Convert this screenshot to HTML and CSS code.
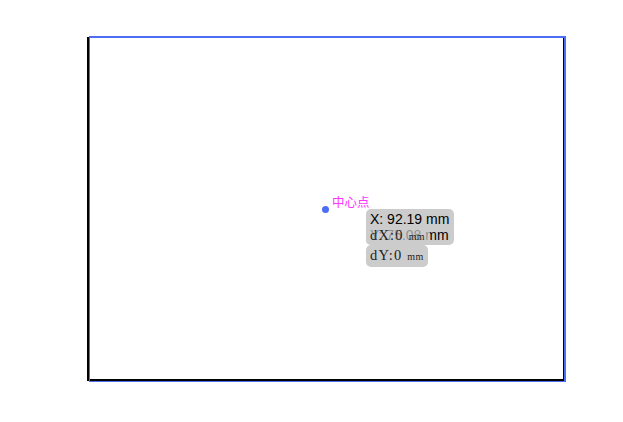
FILE: index.html
```html
<!DOCTYPE html>
<html>
<head>
<meta charset="utf-8">
<link rel="stylesheet" href="styles.css">
</head>
<body>
<div class="canvas">
  <div class="frame-black"></div>
  <div class="frame-blue"></div>
  <div class="dot"></div>
  <div class="label">中心点</div>
  <div class="tip tip-xy">
    <div class="line">X: 92.19 mm</div>
    <div class="line">Y: 75.08 mm</div>
  </div>
  <div class="tip tip-d tip-dx">dX:0 <span class="unit">mm</span></div>
  <div class="tip tip-d tip-dy">dY:0 <span class="unit">mm</span></div>
</div>
</body>
</html>
```
FILE: styles.css
```css
html, body {
  margin: 0;
  padding: 0;
  background: #fff;
}
.canvas {
  position: relative;
  width: 623px;
  height: 422px;
  overflow: hidden;
  background: #fff;
}
.frame-black {
  position: absolute;
  left: 87px;
  top: 37px;
  width: 474px;
  height: 341px;
  border: 1px solid #000;
  border-left-width: 2px;
  border-bottom-width: 2px;
}
.frame-blue {
  position: absolute;
  left: 89px;
  top: 36px;
  width: 474px;
  height: 343px;
  border: 1px solid #4d6ef2;
  border-top-width: 2px;
  border-right-width: 2px;
}
.dot {
  position: absolute;
  left: 322px;
  top: 206px;
  width: 7px;
  height: 7px;
  border-radius: 50%;
  background: #4d6ef2;
}
.label {
  position: absolute;
  left: 332px;
  top: 194px;
  font-family: "Noto Sans CJK SC", sans-serif;
  font-size: 12.5px;
  line-height: 16px;
  color: #ff33ff;
}
.tip {
  position: absolute;
  border-radius: 5px;
  color: #000;
}
.tip-xy {
  left: 366px;
  top: 209px;
  width: 84px;
  height: 36px;
  padding: 0 0 0 4px;
  background: #cccccc;
  font-family: "Liberation Sans", Arial, sans-serif;
  font-size: 14px;
}
.tip-xy .line {
  height: 13px;
  line-height: 14px;
  margin-top: 3px;
}
.tip-d {
  left: 366px;
  padding-left: 4px;
  font-family: "Liberation Serif", "Times New Roman", serif;
  font-size: 14.5px;
  letter-spacing: 1.2px;
  line-height: 20px;
  color: #222;
}
.tip-dx {
  top: 225px;
  width: 60px;
  height: 20px;
  background: rgba(204, 204, 204, 0.7);
}
.tip-dy {
  top: 245px;
  width: 58px;
  height: 22px;
  background: #cccccc;
}
.unit {
  font-size: 10px;
  letter-spacing: 0.4px;
}
```
